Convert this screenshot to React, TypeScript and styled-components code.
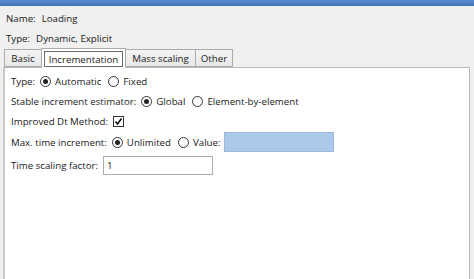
import React from "react";
import styled, { createGlobalStyle } from "styled-components";

const Global = createGlobalStyle`
  html, body { margin: 0; padding: 0; background: #f0f0f0; }
  body { font-family: "Open Sans", "Noto Sans", Arial, sans-serif; font-size: 9.7px; color: #1a1a1a; }
  * { box-sizing: border-box; }
`;

const Window = styled.div`
  width: 474px;
  height: 279px;
  display: flex;
  flex-direction: column;
  overflow: hidden;
  background: #f0f0f0;
`;

const TitleBar = styled.div`
  height: 6px;
  flex: none;
  background: linear-gradient(#5a8ccb, #3f72b6);
`;

const Header = styled.div`
  padding: 2px 6px 0 6px;
  display: flex;
  flex-direction: column;
`;

const InfoRow = styled.div`
  height: 20px;
  display: flex;
  align-items: center;
  gap: 6px;
  white-space: nowrap;
`;

const TabStrip = styled.div`
  display: flex;
  align-items: flex-end;
  height: 20px;
  margin-left: 4px;
  position: relative;
  z-index: 1;
  margin-bottom: -1px;
`;

const Tab = styled.div<{ $active?: boolean; $w: number }>`
  width: ${(p) => p.$w}px;
  height: ${(p) => (p.$active ? 20 : 18)}px;
  margin-bottom: ${(p) => (p.$active ? 0 : 1)}px;
  border: 1px solid #acacac;
  border-bottom: ${(p) => (p.$active ? "none" : "1px solid #acacac")};
  margin-left: -1px;
  background: ${(p) => (p.$active ? "#ffffff" : "linear-gradient(#f4f4f4, #e8e8e8)")};
  display: flex;
  align-items: center;
  justify-content: center;
  padding: ${(p) => (p.$active ? "2px 2px 1px 2px" : "0")};
  white-space: nowrap;
  &:first-child { margin-left: 0; }
`;

const FocusRect = styled.div`
  width: 100%;
  height: 100%;
  border: 1px solid #6c6c6c;
  display: flex;
  align-items: center;
  justify-content: center;
`;

const Panel = styled.div`
  flex: 1;
  margin: 0 4px 0 3px;
  background: #ffffff;
  border: 1px solid #b9b9b9;
  border-left: 2px solid #c8c8c8;
  border-bottom: none;
  padding: 4px 6px 0 6px;
  display: flex;
  flex-direction: column;
`;

const Row = styled.div<{ $h: number }>`
  height: ${(p) => p.$h}px;
  display: flex;
  align-items: center;
  white-space: nowrap;
`;

const Label = styled.span`
  margin-right: 5px;
`;

const OptionText = styled.span<{ $gap?: number }>`
  margin-left: 4px;
  margin-right: ${(p) => (p.$gap ?? 7)}px;
`;

const RadioCircle = styled.span<{ $on?: boolean }>`
  width: 11px;
  height: 11px;
  border-radius: 50%;
  border: 1px solid #333;
  background: #fff;
  display: inline-flex;
  align-items: center;
  justify-content: center;
  flex: none;
  &::after {
    content: "";
    width: 5px;
    height: 5px;
    border-radius: 50%;
    background: ${(p) => (p.$on ? "#222" : "transparent")};
  }
`;

const CheckBox = styled.span`
  width: 11px;
  height: 11px;
  border: 1px solid #333;
  background: #fff;
  display: inline-flex;
  align-items: center;
  justify-content: center;
  flex: none;
`;

const TextInput = styled.div<{ $blue?: boolean; $w: number; $h: number }>`
  width: ${(p) => p.$w}px;
  height: ${(p) => p.$h}px;
  border: 1px solid ${(p) => (p.$blue ? "#9ab9dd" : "#abadb3")};
  background: ${(p) => (p.$blue ? "#abcaeb" : "#ffffff")};
  display: flex;
  align-items: center;
  padding-left: 3px;
  flex: none;
`;

const Radio = ({ on, gap, children }: { on?: boolean; gap?: number; children: React.ReactNode }) => (
  <>
    <RadioCircle $on={on} />
    <OptionText $gap={gap}>{children}</OptionText>
  </>
);

export default function App() {
  return (
    <Window>
      <Global />
      <TitleBar />
      <Header>
        <InfoRow>
          <span>Name:</span>
          <span>Loading</span>
        </InfoRow>
        <InfoRow>
          <span>Type:</span>
          <span>Dynamic, Explicit</span>
        </InfoRow>
      </Header>
      <TabStrip>
        <Tab $w={38}>Basic</Tab>
        <Tab $active $w={85}>
          <FocusRect>Incrementation</FocusRect>
        </Tab>
        <Tab $w={71}>Mass scaling</Tab>
        <Tab $w={38}>Other</Tab>
      </TabStrip>
      <Panel>
        <Row $h={19}>
          <Label>Type:</Label>
          <Radio on>Automatic</Radio>
          <Radio>Fixed</Radio>
        </Row>
        <Row $h={20}>
          <Label>Stable increment estimator:</Label>
          <Radio on>Global</Radio>
          <Radio>Element-by-element</Radio>
        </Row>
        <Row $h={21}>
          <Label>Improved Dt Method:</Label>
          <CheckBox>
            <svg width="9" height="9" viewBox="0 0 9 9">
              <path d="M1.5 4.5 L3.5 7 L7.5 1.5" fill="none" stroke="#111" strokeWidth="1.6" />
            </svg>
          </CheckBox>
        </Row>
        <Row $h={20}>
          <Label>Max. time increment:</Label>
          <Radio on>Unlimited</Radio>
          <Radio gap={3}>Value:</Radio>
          <TextInput $blue $w={110} $h={20} />
        </Row>
        <Row $h={26}>
          <Label>Time scaling factor:</Label>
          <TextInput $w={110} $h={19}>1</TextInput>
        </Row>
      </Panel>
    </Window>
  );
}
